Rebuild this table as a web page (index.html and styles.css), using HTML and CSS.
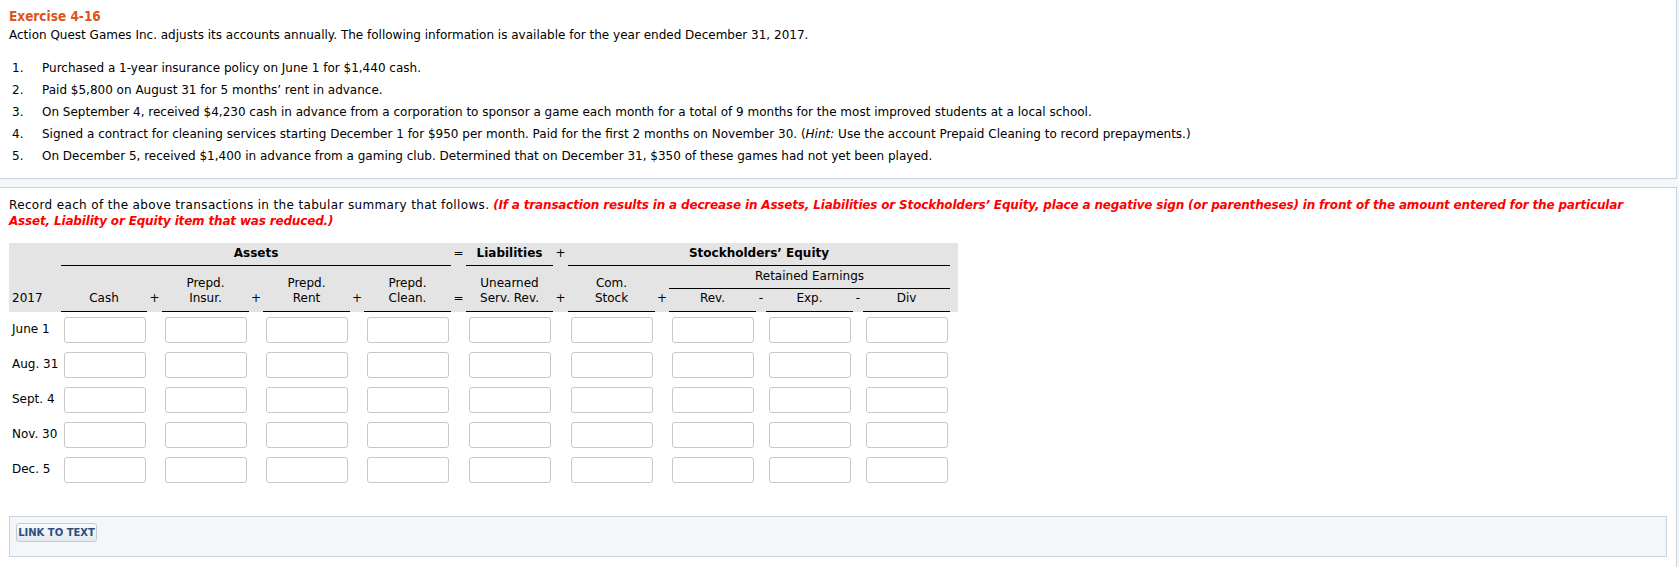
FILE: index.html
```html
<!DOCTYPE html>
<html lang="en">
<head>
<meta charset="utf-8">
<title>Exercise 4-16</title>
<link rel="stylesheet" href="styles.css">
</head>
<body>
<div class="panel panel-q">
  <h1 class="title">Exercise 4-16</h1>
  <p class="intro">Action Quest Games Inc. adjusts its accounts annually. The following information is available for the year ended December 31, 2017.</p>
  <ol class="items">
    <li><span class="num">1.</span><span>Purchased a 1-year insurance policy on June 1 for $1,440 cash.</span></li>
    <li><span class="num">2.</span><span>Paid $5,800 on August 31 for 5 months’ rent in advance.</span></li>
    <li><span class="num">3.</span><span>On September 4, received $4,230 cash in advance from a corporation to sponsor a game each month for a total of 9 months for the most improved students at a local school.</span></li>
    <li><span class="num">4.</span><span>Signed a contract for cleaning services starting December 1 for $950 per month. Paid for the first 2 months on November 30. (<i>Hint:</i> Use the account Prepaid Cleaning to record prepayments.)</span></li>
    <li><span class="num">5.</span><span>On December 5, received $1,400 in advance from a gaming club. Determined that on December 31, $350 of these games had not yet been played.</span></li>
  </ol>
</div>
<div class="panel panel-a">
  <p class="instr"><span class="lead">Record each of the above transactions in the tabular summary that follows.</span> <em class="warn">(If a transaction results in a decrease in Assets, Liabilities or Stockholders’ Equity, place a negative sign (or parentheses) in front of the amount entered for the particular Asset, Liability or Equity item that was reduced.)</em></p>
  <div class="sheet">
    <div class="thead">
      <div class="grp g-assets">Assets</div>
      <div class="op r1 c9">=</div>
      <div class="grp g-liab">Liabilities</div>
      <div class="op r1 c11">+</div>
      <div class="grp g-se">Stockholders’ Equity</div>

      <div class="year">2017</div>
      <div class="col c2">Cash</div>
      <div class="op r23 c3">+</div>
      <div class="col c4">Prepd.<br>Insur.</div>
      <div class="op r23 c5">+</div>
      <div class="col c6">Prepd.<br>Rent</div>
      <div class="op r23 c7">+</div>
      <div class="col c8">Prepd.<br>Clean.</div>
      <div class="op r23 c9">=</div>
      <div class="col c10">Unearned<br>Serv. Rev.</div>
      <div class="op r23 c11">+</div>
      <div class="col c12">Com.<br>Stock</div>
      <div class="op r23 c13">+</div>
      <div class="re">Retained Earnings</div>
      <div class="sub c14">Rev.</div>
      <div class="op r3 c15">-</div>
      <div class="sub c16">Exp.</div>
      <div class="op r3 c17">-</div>
      <div class="sub c18">Div</div>
    </div>
    <div class="tbody">
      <div class="trow">
        <div class="date">June 1</div>
        <div class="cell c2"><input class="amt" type="text"></div>
        <div class="cell c4"><input class="amt" type="text"></div>
        <div class="cell c6"><input class="amt" type="text"></div>
        <div class="cell c8"><input class="amt" type="text"></div>
        <div class="cell c10"><input class="amt" type="text"></div>
        <div class="cell c12"><input class="amt" type="text"></div>
        <div class="cell c14"><input class="amt" type="text"></div>
        <div class="cell c16"><input class="amt" type="text"></div>
        <div class="cell c18"><input class="amt" type="text"></div>
      </div>
      <div class="trow">
        <div class="date">Aug. 31</div>
        <div class="cell c2"><input class="amt" type="text"></div>
        <div class="cell c4"><input class="amt" type="text"></div>
        <div class="cell c6"><input class="amt" type="text"></div>
        <div class="cell c8"><input class="amt" type="text"></div>
        <div class="cell c10"><input class="amt" type="text"></div>
        <div class="cell c12"><input class="amt" type="text"></div>
        <div class="cell c14"><input class="amt" type="text"></div>
        <div class="cell c16"><input class="amt" type="text"></div>
        <div class="cell c18"><input class="amt" type="text"></div>
      </div>
      <div class="trow">
        <div class="date">Sept. 4</div>
        <div class="cell c2"><input class="amt" type="text"></div>
        <div class="cell c4"><input class="amt" type="text"></div>
        <div class="cell c6"><input class="amt" type="text"></div>
        <div class="cell c8"><input class="amt" type="text"></div>
        <div class="cell c10"><input class="amt" type="text"></div>
        <div class="cell c12"><input class="amt" type="text"></div>
        <div class="cell c14"><input class="amt" type="text"></div>
        <div class="cell c16"><input class="amt" type="text"></div>
        <div class="cell c18"><input class="amt" type="text"></div>
      </div>
      <div class="trow">
        <div class="date">Nov. 30</div>
        <div class="cell c2"><input class="amt" type="text"></div>
        <div class="cell c4"><input class="amt" type="text"></div>
        <div class="cell c6"><input class="amt" type="text"></div>
        <div class="cell c8"><input class="amt" type="text"></div>
        <div class="cell c10"><input class="amt" type="text"></div>
        <div class="cell c12"><input class="amt" type="text"></div>
        <div class="cell c14"><input class="amt" type="text"></div>
        <div class="cell c16"><input class="amt" type="text"></div>
        <div class="cell c18"><input class="amt" type="text"></div>
      </div>
      <div class="trow">
        <div class="date">Dec. 5</div>
        <div class="cell c2"><input class="amt" type="text"></div>
        <div class="cell c4"><input class="amt" type="text"></div>
        <div class="cell c6"><input class="amt" type="text"></div>
        <div class="cell c8"><input class="amt" type="text"></div>
        <div class="cell c10"><input class="amt" type="text"></div>
        <div class="cell c12"><input class="amt" type="text"></div>
        <div class="cell c14"><input class="amt" type="text"></div>
        <div class="cell c16"><input class="amt" type="text"></div>
        <div class="cell c18"><input class="amt" type="text"></div>
      </div>
    </div>
  </div>
  <div class="linkbar"><button class="linkbtn" type="button">LINK TO TEXT</button></div>
</div>
</body>
</html>
```

FILE: styles.css
```css
html, body {
  margin: 0;
  padding: 0;
}
body {
  background: #f4f7fa;
  font-family: "DejaVu Sans", sans-serif;
  font-size: 12px;
  color: #000;
}

.panel {
  background: #fff;
  width: 1677px;
  box-sizing: border-box;
  border-right: 1px solid #c9d3df;
  border-bottom: 1px solid #c9d3df;
}
.panel-q {
  padding: 7px 9px 11px;
}
.panel-a {
  margin-top: 8px;
  border-top: 1px solid #c9d3df;
  padding: 9px 9px 40px;
}

.title {
  margin: 0;
  font-family: "DejaVu Sans Condensed", "DejaVu Sans", sans-serif;
  font-size: 13.5px;
  line-height: 18px;
  font-weight: bold;
  color: #de541a;
}
.intro {
  margin: 2px 0 0;
  line-height: 16px;
}
.items {
  list-style: none;
  margin: 14px 0 0;
  padding: 0;
}
.items li {
  display: flex;
  line-height: 22px;
}
.num {
  flex: 0 0 30px;
  padding-left: 3px;
}

.instr {
  margin: 0;
  line-height: 16px;
}
.lead {
  letter-spacing: 0.35px;
}
.warn {
  color: #ff0000;
  font-weight: bold;
  font-style: italic;
  letter-spacing: -0.17px;
}

.sheet {
  margin-top: 14px;
  width: 949px;
}
.thead,
.trow {
  display: grid;
  grid-template-columns: 52px 86px 15px 87px 14px 87px 14px 87px 15px 87px 15px 87px 14px 87px 10px 87px 10px 87px;
}
.thead {
  background: #e4e4e4;
  grid-template-rows: 23px 23px 23px;
  padding-right: 8px;
}

.grp {
  grid-row: 1;
  border-bottom: 1px solid #000;
  text-align: center;
  font-weight: bold;
  line-height: 18px;
  padding-top: 1px;
}
.g-assets { grid-column: 2 / 9; }
.g-liab { grid-column: 10; }
.g-se { grid-column: 12 / 19; }

.op {
  text-align: center;
  line-height: 15px;
}
.op.r1 {
  grid-row: 1;
  line-height: 18px;
  padding-top: 1px;
}
.op.r23 {
  grid-row: 2 / 4;
  align-self: end;
  padding-bottom: 6px;
}
.op.r3 {
  grid-row: 3;
  align-self: end;
  padding-bottom: 6px;
}

.year {
  grid-column: 1;
  grid-row: 2 / 4;
  align-self: end;
  padding: 0 0 6px 3px;
  line-height: 15px;
}
.col {
  grid-row: 2 / 4;
  display: flex;
  flex-direction: column;
  justify-content: flex-end;
  text-align: center;
  line-height: 15px;
  padding-bottom: 5px;
  border-bottom: 1px solid #000;
}
.re {
  grid-row: 2;
  grid-column: 14 / 19;
  text-align: center;
  line-height: 16px;
  padding-top: 2px;
  border-bottom: 1px solid #000;
}
.sub {
  grid-row: 3;
  display: flex;
  flex-direction: column;
  justify-content: flex-end;
  text-align: center;
  line-height: 15px;
  padding-bottom: 5px;
  border-bottom: 1px solid #000;
}

.c2 { grid-column: 2; }
.c3 { grid-column: 3; }
.c4 { grid-column: 4; }
.c5 { grid-column: 5; }
.c6 { grid-column: 6; }
.c7 { grid-column: 7; }
.c8 { grid-column: 8; }
.c9 { grid-column: 9; }
.c10 { grid-column: 10; }
.c11 { grid-column: 11; }
.c12 { grid-column: 12; }
.c13 { grid-column: 13; }
.c14 { grid-column: 14; }
.c15 { grid-column: 15; }
.c16 { grid-column: 16; }
.c17 { grid-column: 17; }
.c18 { grid-column: 18; }

.tbody {
  padding-top: 5px;
}
.trow {
  margin-bottom: 9px;
  align-items: start;
}
.date {
  grid-column: 1;
  padding: 4px 0 0 3px;
  line-height: 16px;
  white-space: nowrap;
}
.amt {
  display: block;
  margin: 0 0 0 3px;
  width: 82px;
  height: 26px;
  box-sizing: border-box;
  border: 1px solid #c8c8c8;
  border-radius: 3px;
  background: #fff;
  padding: 0 4px;
  font: inherit;
}

.linkbar {
  margin-top: 33px;
  border: 1px solid #c9d3df;
  background: #f4f7fa;
  padding: 6px 6px 14px;
}
.linkbtn {
  display: block;
  width: 81px;
  height: 19px;
  padding: 0;
  border: 1px solid #c3ccd6;
  border-radius: 3px;
  background: linear-gradient(#f8fafc, #e5eaf0);
  font-family: inherit;
  font-size: 10px;
  font-weight: bold;
  color: #2b4f82;
}
```
